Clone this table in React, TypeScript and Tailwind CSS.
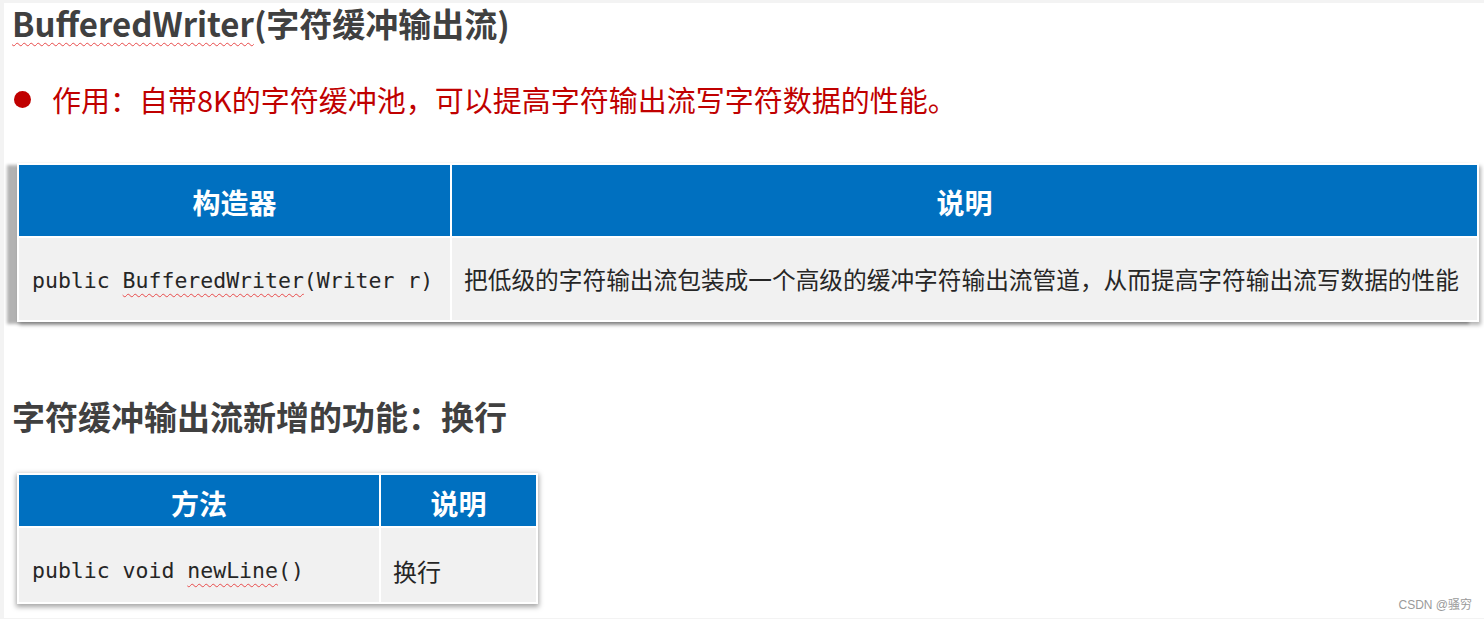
import React from "react";

const cjk = { fontFamily: '"Noto Sans CJK SC", "Noto Sans", sans-serif' };
const mono = { fontFamily: '"DejaVu Sans Mono", "Liberation Mono", monospace' };

const squiggle =
  "underline decoration-wavy decoration-[#e84a4a] decoration-[1px] underline-offset-[5px]";

export default function App() {
  return (
    <div className="w-[1484px] h-[619px] bg-[#f3f3f3] pl-[4px] pt-[3px] pb-[1px] overflow-hidden" style={cjk}>
      <div className="relative w-full h-full bg-white flex flex-col">
        <div className="h-[40px] leading-[40px] pl-[8px] text-[33px] font-bold text-[#404040] whitespace-nowrap">
          <span className={squiggle}>BufferedWriter</span>(字符缓冲输出流)
        </div>

        <div className="mt-[36px] h-[40px] flex items-center pl-[10px]">
          <span className="w-[17px] h-[17px] rounded-full bg-[#c00000]" />
          <span className="ml-[21px] text-[29px] leading-[40px] text-[#c00000] whitespace-nowrap">
            作用：自带8K的字符缓冲池，可以提高字符输出流写字符数据的性能。
          </span>
        </div>

        <div className="mt-[44px] ml-[13px] w-[1462px] bg-white p-[2px] shadow-[-10px_2px_3px_rgba(0,0,0,0.3),2px_3px_4px_rgba(0,0,0,0.3)]">
          <div className="grid grid-cols-[431px_1fr] gap-[2px]">
            <div className="h-[71px] bg-[#0070c0] flex items-center justify-center pt-[2px] text-white font-bold text-[28px]">构造器</div>
            <div className="h-[71px] bg-[#0070c0] flex items-center justify-center pt-[2px] text-white font-bold text-[28px]">说明</div>
            <div className="h-[82px] bg-[#f1f1f1] flex items-center pl-[13px] pt-[4px] text-[21.5px] text-[#262626]" style={mono}>
              public&nbsp;<span className={squiggle}>BufferedWriter</span>(Writer r)
            </div>
            <div className="h-[82px] bg-[#f1f1f1] flex items-center pl-[12px] pt-[2px] text-[23.7px] text-[#262626] whitespace-nowrap">
              把低级的字符输出流包装成一个高级的缓冲字符输出流管道，从而提高字符输出流写数据的性能
            </div>
          </div>
        </div>

        <div className="mt-[74px] h-[40px] leading-[40px] pl-[8px] text-[33px] font-bold text-[#404040] whitespace-nowrap">
          字符缓冲输出流新增的功能：换行
        </div>

        <div className="mt-[37px] ml-[13px] w-[521px] bg-white p-[2px] shadow-[0_2px_5px_1px_rgba(0,0,0,0.35)]">
          <div className="grid grid-cols-[360px_1fr] gap-[2px]">
            <div className="h-[51px] bg-[#0070c0] flex items-center justify-center pt-[4px] text-white font-bold text-[28px]">方法</div>
            <div className="h-[51px] bg-[#0070c0] flex items-center justify-center pt-[4px] text-white font-bold text-[28px]">说明</div>
            <div className="h-[74px] bg-[#f1f1f1] flex items-center pl-[13px] pt-[12px] text-[21.5px] text-[#262626]" style={mono}>
              public void&nbsp;<span className={squiggle}>newLine</span>()
            </div>
            <div className="h-[74px] bg-[#f1f1f1] flex items-center pl-[12px] pt-[12px] text-[24px] text-[#262626]">换行</div>
          </div>
        </div>

        <div className="absolute right-[12px] bottom-[6px] text-[12px] leading-[14px] text-[#9a9a9a]" style={{ fontFamily: '"Liberation Sans", "Noto Sans CJK SC", sans-serif' }}>
          CSDN @骚穷
        </div>
      </div>
    </div>
  );
}
